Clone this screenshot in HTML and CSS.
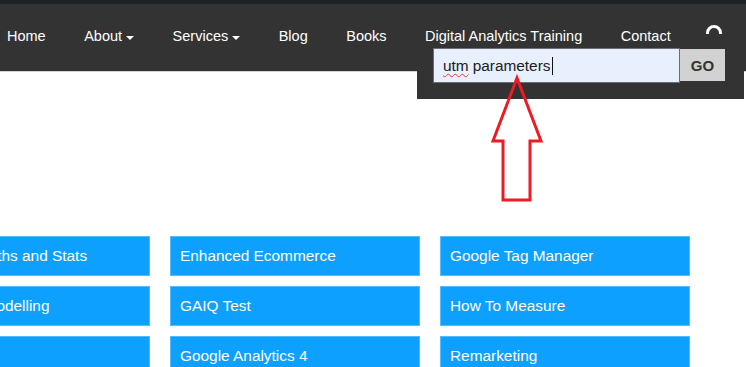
FILE: index.html
```html
<!DOCTYPE html>
<html>
<head>
<meta charset="utf-8">
<link rel="stylesheet" href="styles.css">
</head>
<body>
<div class="page">
  <div class="topstrip"></div>
  <header class="nav">
    <ul class="menu">
      <li class="item">Home</li>
      <li class="item">About<span class="caret"></span></li>
      <li class="item">Services<span class="caret"></span></li>
      <li class="item">Blog</li>
      <li class="item">Books</li>
      <li class="item">Digital Analytics Training</li>
      <li class="item">Contact</li>
      <li class="toggle">
        <svg width="18" height="10" viewBox="0 0 18 10"><path d="M2.5 9 A6.5 6.5 0 0 1 15.5 9" fill="none" stroke="#fff" stroke-width="3" stroke-linecap="round"/></svg>
      </li>
    </ul>
    <div class="search-panel">
      <div class="field"><span class="misspelt">utm</span> parameters<span class="cursor"></span></div>
      <div class="go">GO</div>
    </div>
  </header>

  <main class="cats">
    <div class="cat">Analytics Maths and Stats</div>
    <div class="cat">Enhanced Ecommerce</div>
    <div class="cat">Google Tag Manager</div>
    <div class="cat">Attribution Modelling</div>
    <div class="cat">GAIQ Test</div>
    <div class="cat">How To Measure</div>
    <div class="cat">Facebook</div>
    <div class="cat">Google Analytics 4</div>
    <div class="cat">Remarketing</div>
  </main>

  <svg class="arrow" width="746" height="367" viewBox="0 0 746 367">
    <polygon points="517,78 541,141 530,141 530,200 503,200 503,141 493,141" fill="none" stroke="#ec1c24" stroke-width="3" stroke-linejoin="miter"/>
  </svg>
</div>
</body>
</html>
```

FILE: styles.css
```css
* { box-sizing: border-box; }
html, body {
  margin: 0;
  padding: 0;
  width: 746px;
  height: 367px;
  overflow: hidden;
  background: #fff;
  font-family: "Liberation Sans", Arial, sans-serif;
}
.page {
  position: relative;
  width: 746px;
  height: 367px;
  overflow: hidden;
}
.topstrip {
  height: 4px;
  background: #1d2226;
}
.nav {
  position: relative;
  height: 68px;
  background: #333333;
  border-bottom: 1px solid #d4d4d4;
}
.menu {
  list-style: none;
  margin: 0;
  padding: 24px 0 0 7px;
  display: flex;
  align-items: flex-start;
  gap: 38.5px;
}
.item {
  color: #fff;
  font-size: 14.5px;
  line-height: 17px;
  white-space: nowrap;
  display: flex;
  align-items: center;
}
.caret {
  display: inline-block;
  width: 0;
  height: 0;
  margin-left: 4px;
  margin-top: 2px;
  border-left: 4px solid transparent;
  border-right: 4px solid transparent;
  border-top: 4px solid #fff;
}
.toggle {
  margin-left: -4px;
  margin-top: -4px;
  line-height: 0;
}
.search-panel {
  position: absolute;
  left: 417px;
  top: 40px;
  width: 327px;
  height: 55px;
  background: #333333;
  display: flex;
  align-items: flex-start;
  padding: 4px 19px 0 16px;
  z-index: 2;
}
.field {
  width: 247px;
  height: 35px;
  background: #e8f0fe;
  border: 1px solid #6d6d6d;
  color: #202020;
  font-size: 15.4px;
  line-height: 17px;
  padding: 7px 9px;
  white-space: nowrap;
  display: flex;
  align-items: center;
}
.misspelt {
  text-decoration: underline wavy #e53935;
  text-decoration-thickness: 1px;
  text-underline-offset: 2px;
  margin-right: 4px;
}
.cursor {
  display: inline-block;
  width: 1px;
  height: 18px;
  background: #111;
  margin-left: 1px;
}
.go {
  width: 45px;
  height: 32px;
  margin-top: 1px;
  background: #d2d2d2;
  color: #333;
  font-weight: bold;
  font-size: 15px;
  display: flex;
  align-items: center;
  justify-content: center;
}
.cats {
  display: grid;
  grid-template-columns: 250px 250px 250px;
  column-gap: 20px;
  row-gap: 10px;
  margin: 164px 0 0 -100px;
}
.cat {
  height: 40px;
  background: #0ea0fe;
  border: 1px solid #52bcff;
  color: #fff;
  font-size: 15.4px;
  display: flex;
  align-items: center;
  padding-left: 9px;
  white-space: nowrap;
  overflow: hidden;
}
.arrow {
  position: absolute;
  left: 0;
  top: 0;
  z-index: 3;
  pointer-events: none;
}
```
